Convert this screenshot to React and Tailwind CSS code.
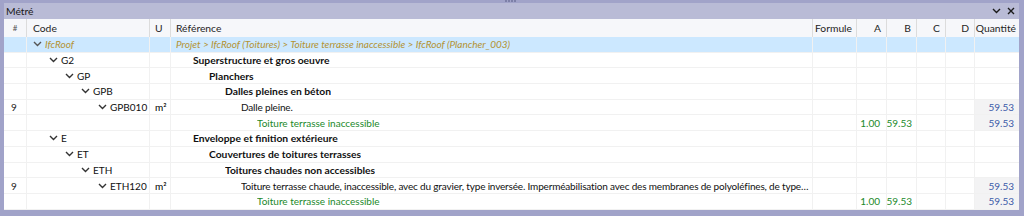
import React from "react";

const COLS = "grid grid-cols-[23px_123px_21px_642px_44px_30px_30px_29px_29px_44px]";

const rows = [
  { kind: "root", depth: 0, code: "IfcRoof", ref: "Projet > IfcRoof (Toitures) > Toiture terrasse inaccessible > IfcRoof (Plancher_003)" },
  { kind: "group", depth: 1, code: "G2", ref: "Superstructure et gros oeuvre" },
  { kind: "group", depth: 2, code: "GP", ref: "Planchers" },
  { kind: "group", depth: 3, code: "GPB", ref: "Dalles pleines en béton" },
  { kind: "item", depth: 4, num: "9", code: "GPB010", unit: "m²", ref: "Dalle pleine.", qty: "59.53" },
  { kind: "line", depth: 5, ref: "Toiture terrasse inaccessible", a: "1.00", b: "59.53", qty: "59.53" },
  { kind: "group", depth: 1, code: "E", ref: "Enveloppe et finition extérieure" },
  { kind: "group", depth: 2, code: "ET", ref: "Couvertures de toitures terrasses" },
  { kind: "group", depth: 3, code: "ETH", ref: "Toitures chaudes non accessibles" },
  {
    kind: "item",
    depth: 4,
    num: "9",
    code: "ETH120",
    unit: "m²",
    ref: "Toiture terrasse chaude, inaccessible, avec du gravier, type inversée. Imperméabilisation avec des membranes de polyoléfines, de type monocouche, fixée mécaniquement.",
    qty: "59.53",
  },
  { kind: "line", depth: 5, ref: "Toiture terrasse inaccessible", a: "1.00", b: "59.53", qty: "59.53" },
];

function Chevron({ className = "" }) {
  return (
    <svg width="9" height="6" viewBox="0 0 9 6" className={className}>
      <path d="M1 1 L4.5 4.5 L8 1" fill="none" stroke="currentColor" strokeWidth="1.4" />
    </svg>
  );
}

function Row({ row }) {
  const selected = row.kind === "root";
  const codePad = { 0: "pl-[6px]", 1: "pl-[22px]", 2: "pl-[38px]", 3: "pl-[54px]", 4: "pl-[71px]" }[row.depth];
  const refPad = {
    0: "pl-[5px]",
    1: "pl-[22px]",
    2: "pl-[38px]",
    3: "pl-[54px]",
    4: "pl-[70px]",
    5: "pl-[86px]",
  }[row.depth];

  let refClass = "text-[#111] tracking-[-0.17px]";
  if (row.kind === "root") refClass = "italic text-[#b39232]";
  if (row.kind === "group") refClass = "font-bold text-[10.3px] text-[#111]";
  if (row.kind === "line") refClass = "text-[#21892a]";

  const cell = "h-full flex items-center border-r border-[#f1f1f1] overflow-hidden whitespace-nowrap";

  return (
    <div
      className={`${COLS} h-[15.7px] border-b border-[#f1f1f1] ${
        selected ? "bg-[#cce8ff]" : "bg-white"
      }`}
    >
      <div className={`${cell} pl-[7px] text-[#222]`}>{row.num}</div>
      <div className={`${cell} ${codePad}`}>
        {row.code && (
          <>
            <Chevron className={`mr-[3px] shrink-0 ${selected ? "text-[#555]" : "text-[#333]"}`} />
            <span className={selected ? "italic text-[#b39232]" : "text-[#111]"}>{row.code}</span>
          </>
        )}
      </div>
      <div className={`${cell} pl-[5px]`}>{row.unit}</div>
      <div className={`${cell} ${refPad} pr-[3px]`}>
        <span className={`truncate ${refClass}`}>{row.ref}</span>
      </div>
      <div className={cell}></div>
      <div className={`${cell} justify-end pr-[6px] text-[#21892a]`}>{row.a}</div>
      <div className={`${cell} justify-end pr-[4px] text-[#21892a]`}>{row.b}</div>
      <div className={cell}></div>
      <div className={cell}></div>
      <div
        className={`h-full flex items-center justify-end pr-[5px] text-[#3b5aa8] ${
          row.qty ? "bg-[#f3f3f4]" : ""
        }`}
      >
        {row.qty}
      </div>
    </div>
  );
}

export default function App() {
  const headerCell = "h-full flex items-center border-r border-[#dcdcdc] whitespace-nowrap";
  return (
    <div
      className="w-[1024px] h-[216px] bg-[#a1a3c9] pt-[3px] pl-[4px] pr-[5px] pb-[6px] flex flex-col text-[10px] leading-[14px] overflow-hidden relative"
      style={{ fontFamily: 'Lato, "Noto Sans", sans-serif' }}
    >
      <div className="absolute top-0 left-[505px] flex gap-[1px]">
        <div className="w-[2px] h-[2px] bg-[#7d80a8]"></div>
        <div className="w-[2px] h-[2px] bg-[#7d80a8]"></div>
        <div className="w-[2px] h-[2px] bg-[#7d80a8]"></div>
        <div className="w-[2px] h-[2px] bg-[#7d80a8]"></div>
      </div>
      <div className="h-[16px] bg-[#b9bbd6] flex items-center pl-[2px] pr-[4px] text-[#1a1a1a] text-[10.3px]">
        <span className="flex-1">Métré</span>
        <Chevron className="text-[#1a1a1a] mr-[6px]" />
        <svg width="8" height="8" viewBox="0 0 8 8">
          <path d="M1 1 L7 7 M7 1 L1 7" stroke="#1a1a1a" strokeWidth="1.4" />
        </svg>
      </div>
      <div className="flex-1 bg-white flex flex-col">
        <div className={`${COLS} h-[18px] bg-[#f6f7fa] text-[#1e1e1e] text-[10.3px]`}>
          <div className={`${headerCell} justify-center text-[#555] text-[8px]`}>#</div>
          <div className={`${headerCell} pl-[6px]`}>Code</div>
          <div className={`${headerCell} pl-[5px]`}>U</div>
          <div className={`${headerCell} pl-[5px]`}>Référence</div>
          <div className={`${headerCell} justify-end pr-[4px]`}>Formule</div>
          <div className={`${headerCell} justify-end pr-[5px]`}>A</div>
          <div className={`${headerCell} justify-end pr-[5px]`}>B</div>
          <div className={`${headerCell} justify-end pr-[5px]`}>C</div>
          <div className={`${headerCell} justify-end pr-[5px]`}>D</div>
          <div className="h-full flex items-center justify-end pr-[3px]">Quantité</div>
        </div>
        {rows.map((row, i) => (
          <Row key={i} row={row} />
        ))}
      </div>
    </div>
  );
}
